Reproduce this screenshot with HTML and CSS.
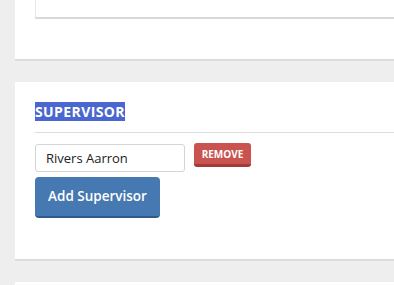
FILE: index.html
```html
<!DOCTYPE html>
<html>
<head>
<meta charset="utf-8">
<link rel="stylesheet" href="styles.css">
</head>
<body>
<div class="page">
  <section class="panel panel-top">
    <div class="inner-box"></div>
  </section>
  <section class="panel panel-main">
    <h3 class="heading"><span class="hl">SUPERVISOR</span></h3>
    <hr class="rule">
    <div class="row">
      <div class="input">Rivers Aarron</div>
      <button class="btn-remove">REMOVE</button>
    </div>
    <button class="btn-add">Add Supervisor</button>
  </section>
  <section class="panel panel-next"></section>
</div>
</body>
</html>
```

FILE: styles.css
```css
html, body {
  margin: 0;
  padding: 0;
  height: 285px;
  background: #eeeeee;
  font-family: "Open Sans", "Liberation Sans", sans-serif;
  overflow: hidden;
}
.page {
  padding-left: 15px;
}
.panel {
  background: #ffffff;
  border-bottom: 2px solid #dcdcdc;
  margin-bottom: 21px;
  box-sizing: border-box;
}
.panel-top {
  height: 61px;
  padding-left: 20px;
}
.inner-box {
  height: 17px;
  border-left: 1px solid #e6e6e6;
  border-bottom: 2px solid #d9d9d9;
}
.panel-main {
  height: 179px;
  padding: 20px 0 0 20px;
}
.heading {
  margin: 0;
  display: flex;
  height: 19px;
}
.hl {
  display: block;
  width: 90px;
  height: 19px;
  background: #4a66cf;
  color: #ffffff;
  font-size: 14px;
  font-weight: 700;
  line-height: 19px;
  letter-spacing: 0.4px;
  white-space: nowrap;
}
.rule {
  margin: 11px 0 0 0;
  border: 0;
  border-top: 1px solid #dddddd;
  height: 0;
}
.row {
  display: flex;
  align-items: flex-start;
  gap: 9px;
  margin-top: 10px;
}
.input {
  margin-top: 1px;
  width: 150px;
  height: 28px;
  box-sizing: border-box;
  border: 1px solid #d4d4d4;
  border-radius: 3px;
  padding-left: 10px;
  font-size: 13px;
  line-height: 26px;
  color: #222;
}
.btn-remove {
  width: 57px;
  height: 24px;
  box-sizing: border-box;
  border: 0;
  border-bottom: 3px solid #a33c38;
  border-radius: 3px;
  background: #c9544f;
  color: #fff;
  font-family: "Open Sans", "Liberation Sans", sans-serif;
  font-size: 10px;
  font-weight: 700;
  padding: 0;
  line-height: 20px;
}
.btn-add {
  display: block;
  margin-top: 5px;
  width: 125px;
  height: 41px;
  box-sizing: border-box;
  border: 0;
  border-bottom: 2px solid #2f5b8c;
  border-radius: 4px;
  background: #4678b1;
  color: #fff;
  font-family: "Open Sans", "Liberation Sans", sans-serif;
  font-size: 13.5px;
  font-weight: 600;
  padding: 0;
  line-height: 39px;
}
.panel-next {
  height: 3px;
  border: 0;
  margin-bottom: 0;
}
```
